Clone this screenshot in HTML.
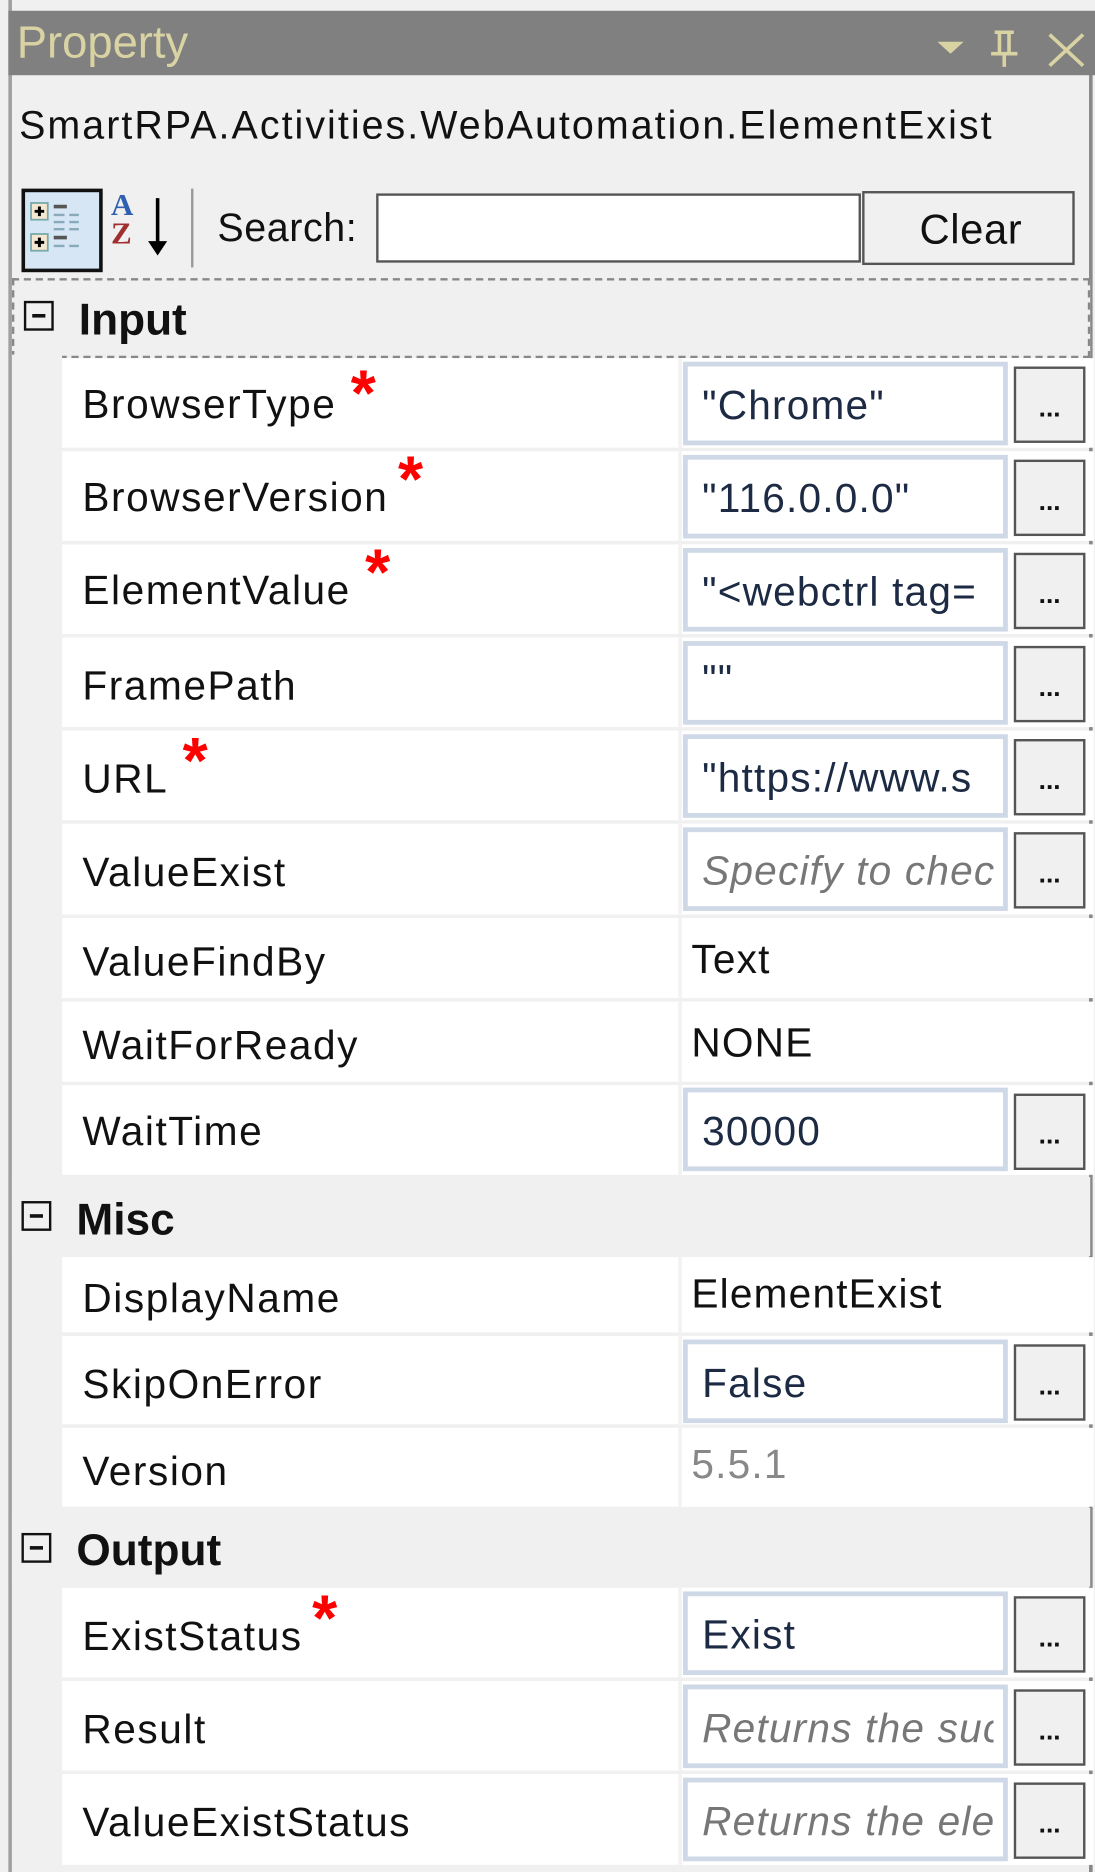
<!DOCTYPE html>
<html><head><meta charset="utf-8">
<style>
html,body{margin:0;padding:0;background:#f0f0f0;}
body{width:1095px;height:1872px;overflow:hidden;position:relative;}
#w{position:absolute;left:0;top:0;width:917px;height:1568px;transform:scale(1.19411,1.19388);transform-origin:0 0;font-family:"Liberation Sans",sans-serif;color:#111;}
.a{position:absolute;}
.title{left:7px;top:9px;width:910px;height:54px;background:#808080;}
.title span{position:absolute;left:7px;top:6px;font-size:38px;color:#d9d3a3;letter-spacing:0px;}
.row{position:absolute;left:52px;width:861px;background:#fff;}
.nm{position:absolute;left:17px;font-size:34px;letter-spacing:1.3px;white-space:nowrap;}
.st{color:#f00;font-size:54px;font-weight:bold;position:relative;top:-2px;margin-left:12px;line-height:0;}
.vc{position:absolute;left:516px;top:0;bottom:0;width:345px;background:#fff;border-left:3px solid #f2f2f2;}
.tb{position:absolute;left:520px;width:264px;background:#fff;border:4px solid #cfd8e6;}
.tb span{position:absolute;left:12px;font-size:34px;letter-spacing:1px;color:#1c2a44;white-space:nowrap;overflow:hidden;right:8px;}
.tb span.i{font-style:italic;color:#777;}
.btn{position:absolute;left:797px;width:56px;background:#f0f0f0;border:2px solid #555;font-size:22px;text-align:center;line-height:66px;font-weight:bold;}
.pv{position:absolute;left:527px;font-size:34px;letter-spacing:1px;}
.hdr{position:absolute;left:10px;width:903px;background:#f0f0f0;}
.hdr b{position:absolute;left:54px;font-size:37px;}
.box{position:absolute;left:8px;width:21px;height:21px;border:2px solid #111;}
.box:after{content:"";position:absolute;left:5px;top:9px;width:11px;height:3px;background:#111;}
</style></head><body><div id="w">
<div class="a" style="left:7px;top:0;width:3px;height:1568px;background:#a0a0a0"></div>
<div class="a" style="left:912px;top:62px;width:3px;height:1506px;background:#888"></div>
<div class="a title"><span>Property</span>
<svg class="a" style="left:768px;top:12px" width="142" height="38" viewBox="0 0 142 38"><path d="M10 14 L32 14 L21 24 Z" fill="#d9d3a3"/><path d="M62 6 V24 M70 6 V24 M58 6 H74 M55 24 H77 M66 24 V35" stroke="#d9d3a3" stroke-width="3" fill="none"/><path d="M104 8 L132 34 M132 8 L104 34" stroke="#d9d3a3" stroke-width="3"/></svg>
</div>
<div class="a" style="left:16px;top:86px;font-size:33px;letter-spacing:1.7px;white-space:nowrap;">SmartRPA.Activities.WebAutomation.ElementExist</div>
<!-- toolbar -->
<div class="a" style="left:18px;top:158px;width:62px;height:64px;border:3px solid #111;background:#d6e6f5;"></div>
<svg class="a" style="left:20px;top:160px" width="60" height="60" viewBox="0 0 60 60"><rect x="6" y="10" width="14" height="14" fill="#f5e8d0" stroke="#7aa" stroke-width="1.5"/><rect x="6" y="36" width="14" height="14" fill="#f5e8d0" stroke="#7aa" stroke-width="1.5"/><path d="M13 13 V21 M9 17 H17 M13 39 V47 M9 43 H17" stroke="#000" stroke-width="2.5"/><path d="M25 13 H36 M25 39 H36" stroke="#555" stroke-width="3"/><path d="M25 20 H34 M38 20 H46 M25 26 H34 M38 26 H46 M25 32 H34 M38 32 H46 M25 46 H34 M38 46 H46" stroke="#8ab" stroke-width="2"/></svg>
<div class="a" style="left:93px;top:160px;font-family:'Liberation Serif',serif;font-weight:bold;font-size:26px;line-height:24px;"><div style="color:#3060b0">A</div><div style="color:#a03030">Z</div></div>
<svg class="a" style="left:120px;top:164px" width="24" height="54"><path d="M12 2 V46" stroke="#000" stroke-width="3"/><path d="M4 38 L12 50 L20 38" fill="#000"/></svg>
<div class="a" style="left:160px;top:158px;width:2px;height:66px;background:#999"></div>
<div class="a" style="left:182px;top:172px;font-size:33px;letter-spacing:0.5px;">Search:</div>
<div class="a" style="left:315px;top:162px;width:402px;height:54px;background:#fff;border:2px solid #555;"></div>
<div class="a" style="left:722px;top:160px;width:174px;height:58px;background:#f0f0f0;border:2px solid #555;"></div>
<div class="a" style="left:770px;top:173px;font-size:35px;letter-spacing:0.5px;">Clear</div>
<!-- Input header -->
<div class="hdr" style="top:233px;height:63px;border:2px dashed #888;left:10px;width:899px;"><div class="box" style="top:17px"></div><b style="top:12px">Input</b></div>
<div class="a" style="left:10px;top:297px;width:42px;height:1271px;background:#f0f0f0"></div>

<div class="row" style="top:300px;height:75px"><div class="nm" style="top:20px">BrowserType<span class="st">*</span></div><div class="vc"></div><div class="tb" style="top:3px;height:62px"><span style="top:14px">"Chrome"</span></div><div class="btn" style="top:7px;height:60px">...</div></div>
<div class="row" style="top:378px;height:75px"><div class="nm" style="top:20px">BrowserVersion<span class="st" style="margin-left:8px;top:-8px">*</span></div><div class="vc"></div><div class="tb" style="top:3px;height:62px"><span style="top:14px">"116.0.0.0"</span></div><div class="btn" style="top:7px;height:60px">...</div></div>
<div class="row" style="top:456px;height:75px"><div class="nm" style="top:20px">ElementValue<span class="st" style="top:-8px">*</span></div><div class="vc"></div><div class="tb" style="top:3px;height:62px"><span style="top:14px">"&lt;webctrl tag=</span></div><div class="btn" style="top:7px;height:60px">...</div></div>
<div class="row" style="top:534px;height:75px"><div class="nm" style="top:22px">FramePath</div><div class="vc"></div><div class="tb" style="top:3px;height:62px"><span style="top:10px">""</span></div><div class="btn" style="top:7px;height:60px">...</div></div>
<div class="row" style="top:612px;height:75px"><div class="nm" style="top:22px">URL<span class="st" style="top:-8px">*</span></div><div class="vc"></div><div class="tb" style="top:3px;height:62px"><span style="top:14px">"https://www.s</span></div><div class="btn" style="top:7px;height:60px">...</div></div>
<div class="row" style="top:690px;height:76px"><div class="nm" style="top:22px">ValueExist</div><div class="vc"></div><div class="tb" style="top:3px;height:62px"><span class="i" style="top:14px">Specify to check</span></div><div class="btn" style="top:7px;height:60px">...</div></div>
<div class="row" style="top:769px;height:67px"><div class="nm" style="top:18px">ValueFindBy</div><div class="vc"></div><div class="pv" style="top:16px">Text</div></div>
<div class="row" style="top:839px;height:67px"><div class="nm" style="top:18px">WaitForReady</div><div class="vc"></div><div class="pv" style="top:16px">NONE</div></div>
<div class="row" style="top:909px;height:75px"><div class="nm" style="top:20px">WaitTime</div><div class="vc"></div><div class="tb" style="top:2px;height:62px"><span style="top:14px">30000</span></div><div class="btn" style="top:7px;height:60px">...</div></div>

<div class="hdr" style="top:986px;height:66px;"><div class="box" style="top:20px"></div><b style="top:15px">Misc</b></div>
<div class="row" style="top:1053px;height:63px"><div class="nm" style="top:16px">DisplayName</div><div class="vc"></div><div class="pv" style="top:12px">ElementExist</div></div>
<div class="row" style="top:1119px;height:74px"><div class="nm" style="top:22px">SkipOnError</div><div class="vc"></div><div class="tb" style="top:3px;height:62px"><span style="top:14px">False</span></div><div class="btn" style="top:7px;height:60px">...</div></div>
<div class="row" style="top:1196px;height:66px"><div class="nm" style="top:18px">Version</div><div class="vc"></div><div class="pv" style="top:12px;color:#888">5.5.1</div></div>

<div class="hdr" style="top:1263px;height:66px;"><div class="box" style="top:21px"></div><b style="top:15px">Output</b></div>
<div class="row" style="top:1330px;height:75px"><div class="nm" style="top:22px">ExistStatus<span class="st" style="margin-left:8px;top:-8px">*</span></div><div class="vc"></div><div class="tb" style="top:3px;height:62px"><span style="top:14px">Exist</span></div><div class="btn" style="top:7px;height:60px">...</div></div>
<div class="row" style="top:1408px;height:75px"><div class="nm" style="top:22px">Result</div><div class="vc"></div><div class="tb" style="top:3px;height:62px"><span class="i" style="top:14px">Returns the success</span></div><div class="btn" style="top:7px;height:60px">...</div></div>
<div class="row" style="top:1486px;height:76px"><div class="nm" style="top:22px">ValueExistStatus</div><div class="vc"></div><div class="tb" style="top:3px;height:62px"><span class="i" style="top:14px">Returns the element</span></div><div class="btn" style="top:7px;height:60px">...</div></div>
</div></body></html>
